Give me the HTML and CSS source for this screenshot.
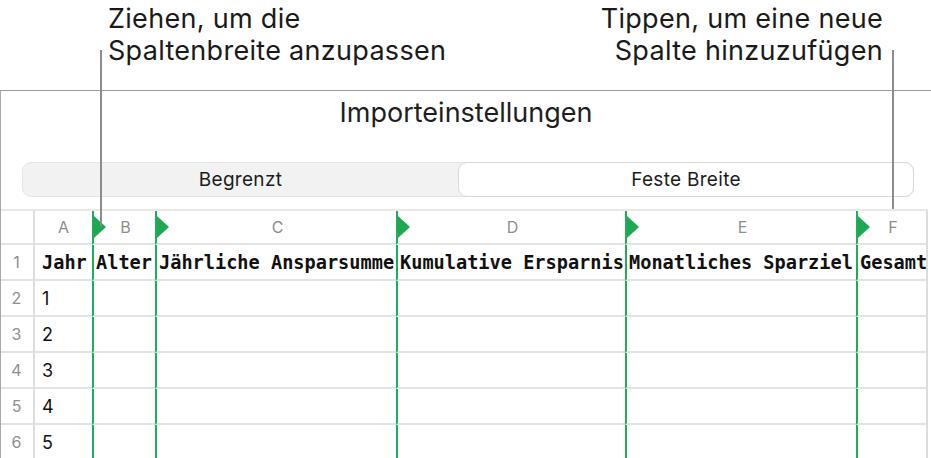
FILE: index.html
```html
<!DOCTYPE html>
<html lang="de">
<head>
<meta charset="utf-8">
<title>Importeinstellungen</title>
<link rel="stylesheet" href="styles.css">
</head>
<body>
<div class="page">
  <div class="callouts">
    <div class="callout callout-left">Ziehen, um die<br>Spaltenbreite anzupassen</div>
    <div class="callout callout-right">Tippen, um eine neue<br>Spalte hinzuzufügen</div>
  </div>
  <div class="leader leader-left"></div>
  <div class="leader leader-right"></div>

  <div class="panel">
    <div class="title">Importeinstellungen</div>
    <div class="segmented">
      <div class="seg">Begrenzt</div>
      <div class="seg seg-active">Feste Breite</div>
    </div>

    <div class="sheet">
      <div class="cell rn hdr"></div>
      <div class="cell colA hdr">A</div>
      <div class="cell col hdr"><span class="flag"></span>B</div>
      <div class="cell col hdr"><span class="flag"></span>C</div>
      <div class="cell col hdr"><span class="flag"></span>D</div>
      <div class="cell col hdr"><span class="flag"></span>E</div>
      <div class="cell col last hdr"><span class="flag"></span>F</div>

      <div class="cell rn">1</div>
      <div class="cell colA mono">Jahr</div>
      <div class="cell col mono">Alter</div>
      <div class="cell col mono">Jährliche Ansparsumme</div>
      <div class="cell col mono">Kumulative Ersparnis</div>
      <div class="cell col mono">Monatliches Sparziel</div>
      <div class="cell col last mono">Gesamt</div>

      <div class="cell rn">2</div>
      <div class="cell colA num">1</div>
      <div class="cell col"></div><div class="cell col"></div><div class="cell col"></div><div class="cell col"></div><div class="cell col last"></div>

      <div class="cell rn">3</div>
      <div class="cell colA num">2</div>
      <div class="cell col"></div><div class="cell col"></div><div class="cell col"></div><div class="cell col"></div><div class="cell col last"></div>

      <div class="cell rn">4</div>
      <div class="cell colA num">3</div>
      <div class="cell col"></div><div class="cell col"></div><div class="cell col"></div><div class="cell col"></div><div class="cell col last"></div>

      <div class="cell rn">5</div>
      <div class="cell colA num">4</div>
      <div class="cell col"></div><div class="cell col"></div><div class="cell col"></div><div class="cell col"></div><div class="cell col last"></div>

      <div class="cell rn">6</div>
      <div class="cell colA num">5</div>
      <div class="cell col"></div><div class="cell col"></div><div class="cell col"></div><div class="cell col"></div><div class="cell col last"></div>
    </div>
  </div>
</div>
</body>
</html>
```

FILE: styles.css
```css
* { box-sizing: border-box; }

html, body {
  margin: 0;
  padding: 0;
  background: #ffffff;
}

body {
  width: 931px;
  height: 458px;
  overflow: hidden;
  font-family: "Inter", "Roboto", "Noto Sans", sans-serif;
  color: #1c1c1c;
}

.page {
  position: relative;
  width: 931px;
  height: 458px;
}

.callouts {
  height: 90px;
  display: flex;
  justify-content: space-between;
  align-items: flex-start;
  padding-top: 3px;
}

.callout {
  font-size: 27px;
  line-height: 32px;
  letter-spacing: 0.3px;
  color: #1a1a1a;
  white-space: nowrap;
}

.callout-left {
  padding-left: 108px;
  text-align: left;
}

.callout-right {
  padding-right: 48px;
  text-align: right;
}

.leader {
  position: absolute;
  width: 2px;
  background: #8c8c8c;
  z-index: 3;
}

.leader-left {
  left: 100px;
  top: 50px;
  height: 176px;
}

.leader-right {
  left: 892px;
  top: 50px;
  height: 159px;
}

.panel {
  height: 368px;
  border-top: 1px solid #9c9c9c;
  border-left: 1px solid #a8a8a8;
  display: flex;
  flex-direction: column;
}

.title {
  height: 71px;
  flex: none;
  padding-top: 5px;
  font-size: 27px;
  line-height: 34px;
  text-align: center;
  color: #1e1e1e;
}

.segmented {
  flex: none;
  margin: 0 17px 0 21px;
  height: 35px;
  display: flex;
  background: #f2f2f2;
  border: 1px solid #e4e4e4;
  border-radius: 9px;
}

.seg {
  flex: 1;
  display: flex;
  align-items: center;
  justify-content: center;
  font-size: 19px;
  letter-spacing: 0.3px;
  color: #1c1c1c;
}

.seg-active {
  flex: none;
  width: 456px;
  background: #ffffff;
  border: 1px solid #d8d8d8;
  border-radius: 9px;
  margin: -1px -1px -1px 0;
}

.sheet {
  flex: none;
  margin-top: 12px;
  width: 927px;
  display: grid;
  grid-template-columns: 34px 57px 63px 241px 229px 231px 72px;
  grid-template-rows: 34px repeat(6, 36px);
  border-top: 2px solid #e8e8e8;
}

.cell {
  position: relative;
  display: flex;
  align-items: center;
  border-bottom: 2px solid #e3e3e3;
  white-space: nowrap;
  overflow: hidden;
}

.hdr {
  justify-content: center;
  font-size: 16px;
  color: #8e8e8e;
}

.rn {
  justify-content: center;
  border-right: 2px solid #dedede;
  font-size: 16px;
  color: #8e8e8e;
  padding-right: 1px;
}

.colA {
  padding-left: 7px;
}

.colA.hdr {
  padding-left: 0;
}

.col {
  border-left: 2px solid #1fae57;
  padding-left: 2px;
}

.last {
  border-right: 2px solid #dcdcdc;
}

.mono {
  font-family: "DejaVu Sans Mono", "Liberation Mono", monospace;
  font-weight: bold;
  font-size: 18.6px;
  color: #111111;
}

.num {
  font-size: 18px;
  color: #111111;
}

.flag {
  position: absolute;
  left: 0;
  top: 5px;
  width: 0;
  height: 0;
  border-left: 12px solid #1ea853;
  border-top: 11px solid transparent;
  border-bottom: 11px solid transparent;
}
```
